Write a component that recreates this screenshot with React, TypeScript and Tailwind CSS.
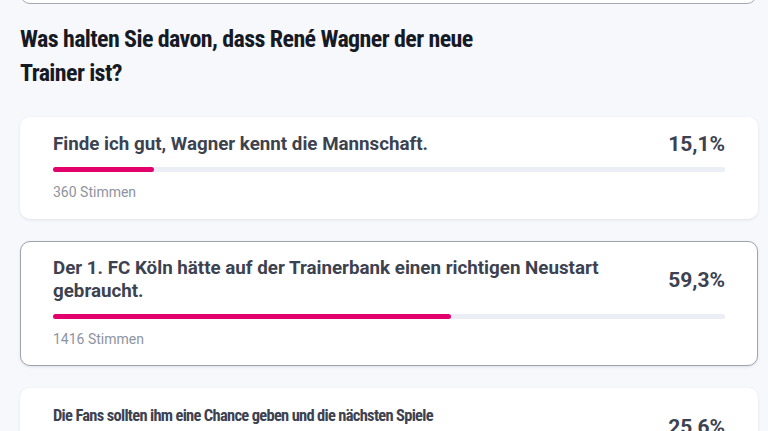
import React from "react"

type Option = {
  label: string
  percent: string
  votes: number
  share: number
  selected?: boolean
  condensed?: boolean
}

const options: Option[] = [
  { label: "Finde ich gut, Wagner kennt die Mannschaft.", percent: "15,1%", votes: 360, share: 15.1 },
  {
    label: "Der 1. FC Köln hätte auf der Trainerbank einen richtigen Neustart gebraucht.",
    percent: "59,3%",
    votes: 1416,
    share: 59.3,
    selected: true,
  },
  {
    label: "Die Fans sollten ihm eine Chance geben und die nächsten Spiele abwarten.",
    percent: "25,6%",
    votes: 602,
    share: 25.6,
    condensed: true,
  },
]

const OptionCard = ({ option }: { option: Option }) => {
  return (
    <div
      className={`rounded-[10px] border bg-white px-[32px] pt-[15px] pb-[17px] shadow-[0_1px_3px_rgba(30,40,70,0.10)] ${
        option.selected ? "border-[#9ea3ae]" : "border-transparent"
      }`}
    >
      <div className="flex items-center gap-6">
        <div className="flex-1">
          <p
            className={
              option.condensed
                ? "max-w-[440px] font-['Roboto_Condensed',Roboto,sans-serif] text-[16.5px] leading-[23px] font-bold tracking-[-0.7px] text-[#3d4250]"
                : "text-[18.75px] leading-[23px] font-bold text-[#3d4250]"
            }
          >
            {option.label}
          </p>
        </div>
        <span className="text-[21px] leading-[23px] font-bold text-[#3d4250]">{option.percent}</span>
      </div>
      <div className="mt-[11px] h-[5px] w-full rounded-full bg-[#eceef6]">
        <div className="h-full rounded-full bg-[#e3006d]" style={{ width: `${option.share}%` }} />
      </div>
      <div className="mt-[11px] text-[14px] leading-[18px] text-[#8e93a0]">{option.votes} Stimmen</div>
    </div>
  )
}

export default function App() {
  return (
    <div className="h-[431px] overflow-hidden bg-[#f7f8fc] pl-[20px] pr-[10px] font-['Roboto',sans-serif]">
      <div className="-mt-[100px] mr-[1px] h-[104px] rounded-[10px] border border-[#a4a8b2] bg-white" />
      <h2 className="mt-[18px] max-w-[470px] font-['Roboto_Condensed',Roboto,sans-serif] text-[24px] leading-[34px] font-bold tracking-[-0.6px] text-[#161a24]">
        Was halten Sie davon, dass René Wagner der neue Trainer ist?
      </h2>
      <div className="mt-[27px] flex flex-col gap-[22px]">
        {options.map((o) => (
          <OptionCard key={o.label} option={o} />
        ))}
      </div>
    </div>
  )
}
